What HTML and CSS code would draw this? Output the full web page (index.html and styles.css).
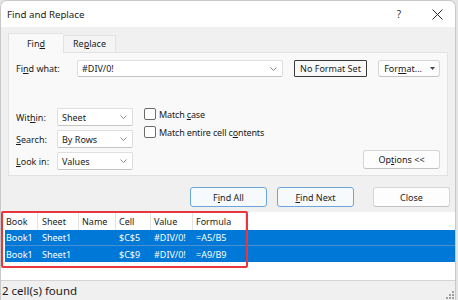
FILE: index.html
```html
<!DOCTYPE html>
<html>
<head>
<meta charset="utf-8">
<title>Find and Replace</title>
<link rel="stylesheet" href="styles.css">
</head>
<body>
<div class="window">
  <div class="titlebar">
    <span class="title">Find and Replace</span>
    <span class="help">?</span>
    <svg class="xicon" width="11" height="11" viewBox="0 0 11 11"><path d="M0.5 0.5L10.5 10.5M10.5 0.5L0.5 10.5" stroke="#262626" stroke-width="1" fill="none"/></svg>
  </div>
  <div class="main">
    <div class="tabs">
      <div class="tab active">Fin<u>d</u></div>
      <div class="tab">Re<u>p</u>lace</div>
    </div>
    <div class="panel">
      <div class="find-row">
        <span class="label lbl-find">Fi<u>n</u>d what:</span>
        <div class="field combo wide"><span>#DIV/0!</span><svg width="7" height="4" viewBox="0 0 7 4"><path d="M0.5 0.5L3.5 3.5L6.5 0.5" fill="none" stroke="#8a8a8a"/></svg></div>
        <div class="btn noformat">No Format Set</div>
        <div class="btn format"><span>For<u>m</u>at...</span><svg width="5" height="3" viewBox="0 0 5 3"><path d="M0 0H5L2.5 3Z" fill="#444"/></svg></div>
      </div>
      <div class="opts">
        <div class="selects">
          <div class="sel-row"><span class="label lbl-sel">Wit<u>h</u>in:</span><div class="field combo sel"><span>Sheet</span><svg width="7" height="4" viewBox="0 0 7 4"><path d="M0.5 0.5L3.5 3.5L6.5 0.5" fill="none" stroke="#8a8a8a"/></svg></div></div>
          <div class="sel-row"><span class="label lbl-sel"><u>S</u>earch:</span><div class="field combo sel"><span>By Rows</span><svg width="7" height="4" viewBox="0 0 7 4"><path d="M0.5 0.5L3.5 3.5L6.5 0.5" fill="none" stroke="#8a8a8a"/></svg></div></div>
          <div class="sel-row"><span class="label lbl-sel"><u>L</u>ook in:</span><div class="field combo sel"><span>Values</span><svg width="7" height="4" viewBox="0 0 7 4"><path d="M0.5 0.5L3.5 3.5L6.5 0.5" fill="none" stroke="#8a8a8a"/></svg></div></div>
        </div>
        <div class="checks">
          <div class="check"><span class="box"></span><span>Match <u>c</u>ase</span></div>
          <div class="check"><span class="box"></span><span>Match entire cell c<u>o</u>ntents</span></div>
        </div>
        <div class="btn options">Op<u>t</u>ions &lt;&lt;</div>
      </div>
    </div>
    <div class="actions">
      <div class="btn action primary">F<u>i</u>nd All</div>
      <div class="btn action primary next"><u>F</u>ind Next</div>
      <div class="btn action close">Close</div>
    </div>
  </div>
  <div class="results">
    <div class="row head">
      <span class="c c1">Book</span><span class="c c2">Sheet</span><span class="c c3">Name</span><span class="c c4">Cell</span><span class="c c5">Value</span><span class="c c6">Formula</span><span class="c c7"></span>
    </div>
    <div class="row sel-item first">
      <span class="c c1">Book1</span><span class="c c2">Sheet1</span><span class="c c3"></span><span class="c c4">$C$5</span><span class="c c5">#DIV/0!</span><span class="c c6">=A5/B5</span><span class="c c7"></span>
    </div>
    <div class="row sel-item">
      <span class="c c1">Book1</span><span class="c c2">Sheet1</span><span class="c c3"></span><span class="c c4">$C$9</span><span class="c c5">#DIV/0!</span><span class="c c6">=A9/B9</span><span class="c c7"></span>
    </div>
  </div>
  <div class="status">
    <span>2 cell(s) found</span>
  </div>
  <svg class="grip" width="9" height="9" viewBox="0 0 9 9"><g fill="#a0a0a0"><rect x="7" y="1" width="2" height="2"/><rect x="4" y="4" width="2" height="2"/><rect x="7" y="4" width="2" height="2"/><rect x="1" y="7" width="2" height="2"/><rect x="4" y="7" width="2" height="2"/><rect x="7" y="7" width="2" height="2"/></g></svg>
  <div class="highlight"></div>
</div>
</body>
</html>
```
FILE: styles.css
```css
* { box-sizing: border-box; margin: 0; padding: 0; }
html, body { width: 458px; height: 300px; overflow: hidden; }
body {
  background: #e4e4e4;
  font-family: "Noto Sans", "Liberation Sans", sans-serif;
  font-size: 9px;
  color: #1b1b1b;
}
u { text-decoration: underline; text-underline-offset: 1px; }

.window {
  position: relative;
  width: 456px;
  height: 300px;
  background: #f0f0f0;
  border: 1px solid #c8c8c8;
  border-bottom: none;
  border-radius: 7px 7px 0 0;
  display: flex;
  flex-direction: column;
  overflow: hidden;
}

.titlebar {
  flex: none;
  height: 26px;
  background: #ffffff;
  display: flex;
  align-items: center;
  padding-left: 6px;
}
.title { flex: 1; font-size: 9.7px; color: #1a1a1a; }
.help { font-size: 10px; color: #333; margin-right: 31px; }
.xicon { margin-right: 12px; }

.main { flex: none; }

.tabs {
  display: flex;
  align-items: flex-end;
  margin: 6px 0 0 7px;
  height: 19px;
}
.tab {
  width: 53px;
  height: 17px;
  background: #f4f4f4;
  border: 1px solid #e2e2e2;
  border-bottom: none;
  text-align: center;
  line-height: 16px;
  color: #1b1b1b;
}
.tab.active {
  width: 55px;
  height: 20px;
  margin-bottom: -1px;
  background: #f9f9f9;
  position: relative;
  z-index: 1;
  line-height: 19px;
  border-right: none;
}

.panel {
  margin: 0 7px;
  height: 124px;
  background: #f9f9f9;
  border: 1px solid #e2e2e2;
  padding: 7px 7px 0 7px;
}

.find-row { display: flex; align-items: center; height: 17px; }
.label { flex: none; }
.lbl-find { width: 61px; }
.lbl-sel { width: 41px; }

.field {
  height: 17px;
  background: #ffffff;
  border: 1px solid #dedede;
  border-bottom-color: #c4c4c4;
  border-radius: 2px;
}
.combo {
  display: flex;
  align-items: center;
  justify-content: space-between;
  padding: 0 5px 0 4px;
}
.wide { width: 207px; }

.btn {
  flex: none;
  display: flex;
  align-items: center;
  justify-content: center;
  background: #fdfdfd;
  border: 1px solid #d6d6d6;
  border-bottom-color: #c2c2c2;
  border-radius: 3px;
  color: #1b1b1b;
}
.noformat {
  margin-left: 11px;
  width: 73px;
  height: 17px;
  border: 1px solid #3a3a3a;
  border-radius: 1px;
  background: #f9f9f9;
}
.format {
  margin-left: 11px;
  width: 62px;
  height: 17px;
  justify-content: flex-end;
  gap: 8px;
  padding-right: 4px;
}

.opts { display: flex; margin-top: 31px; }
.selects { display: flex; flex-direction: column; gap: 4px; }
.sel-row { display: flex; align-items: center; height: 18px; }
.sel { width: 76px; height: 18px; }

.checks {
  margin-left: 11px;
  display: flex;
  flex-direction: column;
  gap: 6px;
}
.check { display: flex; align-items: center; height: 12px; gap: 3px; letter-spacing: -0.15px; }
.box {
  width: 12px;
  height: 12px;
  background: #ffffff;
  border: 1px solid #6b6b6b;
  border-radius: 2px;
}
.options {
  margin-left: auto;
  align-self: flex-end;
  width: 77px;
  height: 19px;
  margin-bottom: 1px;
}

.actions {
  display: flex;
  justify-content: flex-end;
  margin-top: 11px;
  padding-right: 5px;
}
.action { width: 77px; height: 20px; }
.primary { border-color: #6aa6dc; background: #f7fafd; }
.next { margin-left: 10px; }
.close { margin-left: 19px; }

.results {
  flex: none;
  margin-top: 5px;
  height: 68px;
  background: #ffffff;
  padding-left: 4px;
}
.row {
  display: grid;
  grid-template-columns: 33px 41px 37px 35px 42px 53px 1fr;
}
.head { height: 18px; color: #1b1b1b; }
.head .c { border-right: 1px solid #e3e3e3; }
.head .c7 { border-right: none; }
.c { display: flex; align-items: center; padding-left: 3px; white-space: nowrap; }
.c1 { padding-left: 1px; }
.c2 { padding-left: 4px; }
.sel-item { height: 16px; background: #0078d7; color: #ffffff; }
.first { border-bottom: 1px solid #4a8fcf; }

.status {
  flex: 1;
  border-top: 1px solid #d4d4d4;
  background: #f0f0f0;
  display: flex;
  align-items: center;
  padding-left: 1px;
  font-size: 11.5px;
}

.grip { position: absolute; right: 1px; bottom: 1px; }

.highlight {
  position: absolute;
  left: 0;
  top: 210px;
  width: 247px;
  height: 57px;
  border: 2px solid #e8363c;
  border-radius: 2px;
}
```
